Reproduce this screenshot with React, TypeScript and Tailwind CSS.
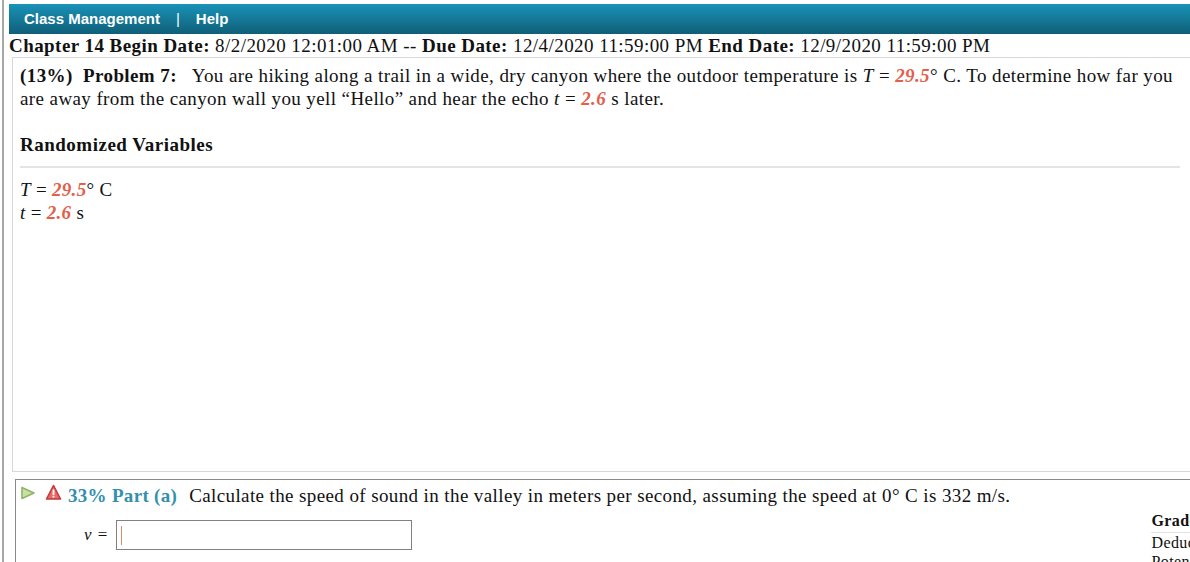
const serif = "font-['Liberation_Serif','Times_New_Roman',serif]";

function Val({ children }: { children: React.ReactNode }) {
  return <span className="font-bold italic text-[#e2604c]">{children}</span>;
}

export default function App() {
  return (
    <div className={`h-[562px] w-[1190px] overflow-hidden bg-white text-[#111] ${serif} text-[19px] leading-[23px] tracking-[0.44px]`}>
      <div className="ml-[2px] h-full border-l-2 border-[#a8a8a8] pl-[5px]">
        {/* Top nav */}
        <div className="pt-[4px]">
          <div className="flex h-[30px] items-center gap-[16px] bg-gradient-to-b from-[#1a93b8] to-[#0f5f78] pb-[1px] pl-[15px] font-['Liberation_Sans',Arial,sans-serif] text-[15px] font-bold tracking-normal text-white">
            <span>Class Management</span>
            <span className="font-normal">|</span>
            <span>Help</span>
          </div>
        </div>

        {/* Dates */}
        <div className="mt-[1px] h-[22px] whitespace-nowrap leading-[22px]">
          <b>Chapter 14 Begin Date:</b> 8/2/2020 12:01:00 AM -- <b>Due Date:</b> 12/4/2020 11:59:00 PM <b>End Date:</b> 12/9/2020 11:59:00 PM
        </div>

        {/* Problem panel */}
        <div className="ml-[3px] flex h-[415px] flex-col border-l border-t border-b border-[#d8d8d8] pl-[7px] pr-[9px] pt-[6px]">
          <p className="w-[1153px] text-justify tracking-[0.4px]">
            <b>(13%)&nbsp; Problem 7:</b>&nbsp;&nbsp; You are hiking along a trail in a wide, dry canyon where the outdoor temperature is{" "}
            <i>T</i> = <Val>29.5</Val>° C. To determine how far you are away from the canyon wall you yell “Hello” and hear the echo{" "}
            <i>t</i> = <Val>2.6</Val> s later.
          </p>
          <h3 className="mt-[23px] font-bold tracking-[0.5px]">Randomized Variables</h3>
          <div className="mt-[10px] mr-[1px] h-[2px] bg-[#e4e4e4]" />
          <div className="mt-[10px] tracking-[0.3px]">
            <div><i>T</i> = <Val>29.5</Val>° C</div>
            <div><i>t</i> = <Val>2.6</Val> s</div>
          </div>
        </div>

        {/* Part (a) */}
        <div className="ml-[6px] mt-[7px] h-[100px] border-l border-t border-[#8a8a8a]">
          <div className="flex h-[40px] items-start whitespace-nowrap pl-[4px] pt-[4px]">
            <svg width="16" height="14" viewBox="0 0 16 14" className="mr-[9px] mt-[2px]">
              <path d="M2 1.5 L14 7 L2 12.5 Z" fill="#c9e0a0" stroke="#8fb56a" strokeWidth="1.6" strokeLinejoin="round" />
            </svg>
            <svg width="17" height="17" viewBox="0 0 17 17" className="mr-[6px]">
              <path d="M8.5 1.5 L15.5 15 L1.5 15 Z" fill="#e86a6a" stroke="#c23b3b" strokeWidth="1.6" strokeLinejoin="round" />
              <rect x="7.6" y="5.5" width="1.8" height="5.5" fill="#fff" />
              <rect x="7.6" y="11.8" width="1.8" height="1.8" fill="#fff" />
            </svg>
            <b className="tracking-[0.3px] text-[#3490ad]">33% Part (a)</b>
            <span className="ml-[12px] tracking-[0.39px]">Calculate the speed of sound in the valley in meters per second, assuming the speed at 0° C is 332 m/s.</span>
          </div>
          <div className="flex">
            <div className="flex shrink-0 items-start whitespace-nowrap pl-[68px]">
              <span className="mr-[8px] mt-[3px] text-[17px] tracking-[1px]"><i>v</i> =</span>
              <div className="flex h-[30px] w-[296px] items-center border border-[#808080] pl-[4px]">
                <div className="h-[19px] w-px bg-[#d98a6a]" />
              </div>
            </div>
            <div className="ml-[739px] -mt-[9px] w-[60px] shrink-0 overflow-hidden whitespace-nowrap text-[16px] leading-[20px]">
              <div className="font-bold">Grades</div>
              <div className="mt-[1px] border-t border-[#e4e4e4]">Deductions</div>
              <div className="-mt-px">Potential</div>
            </div>
          </div>
        </div>
      </div>
    </div>
  );
}
